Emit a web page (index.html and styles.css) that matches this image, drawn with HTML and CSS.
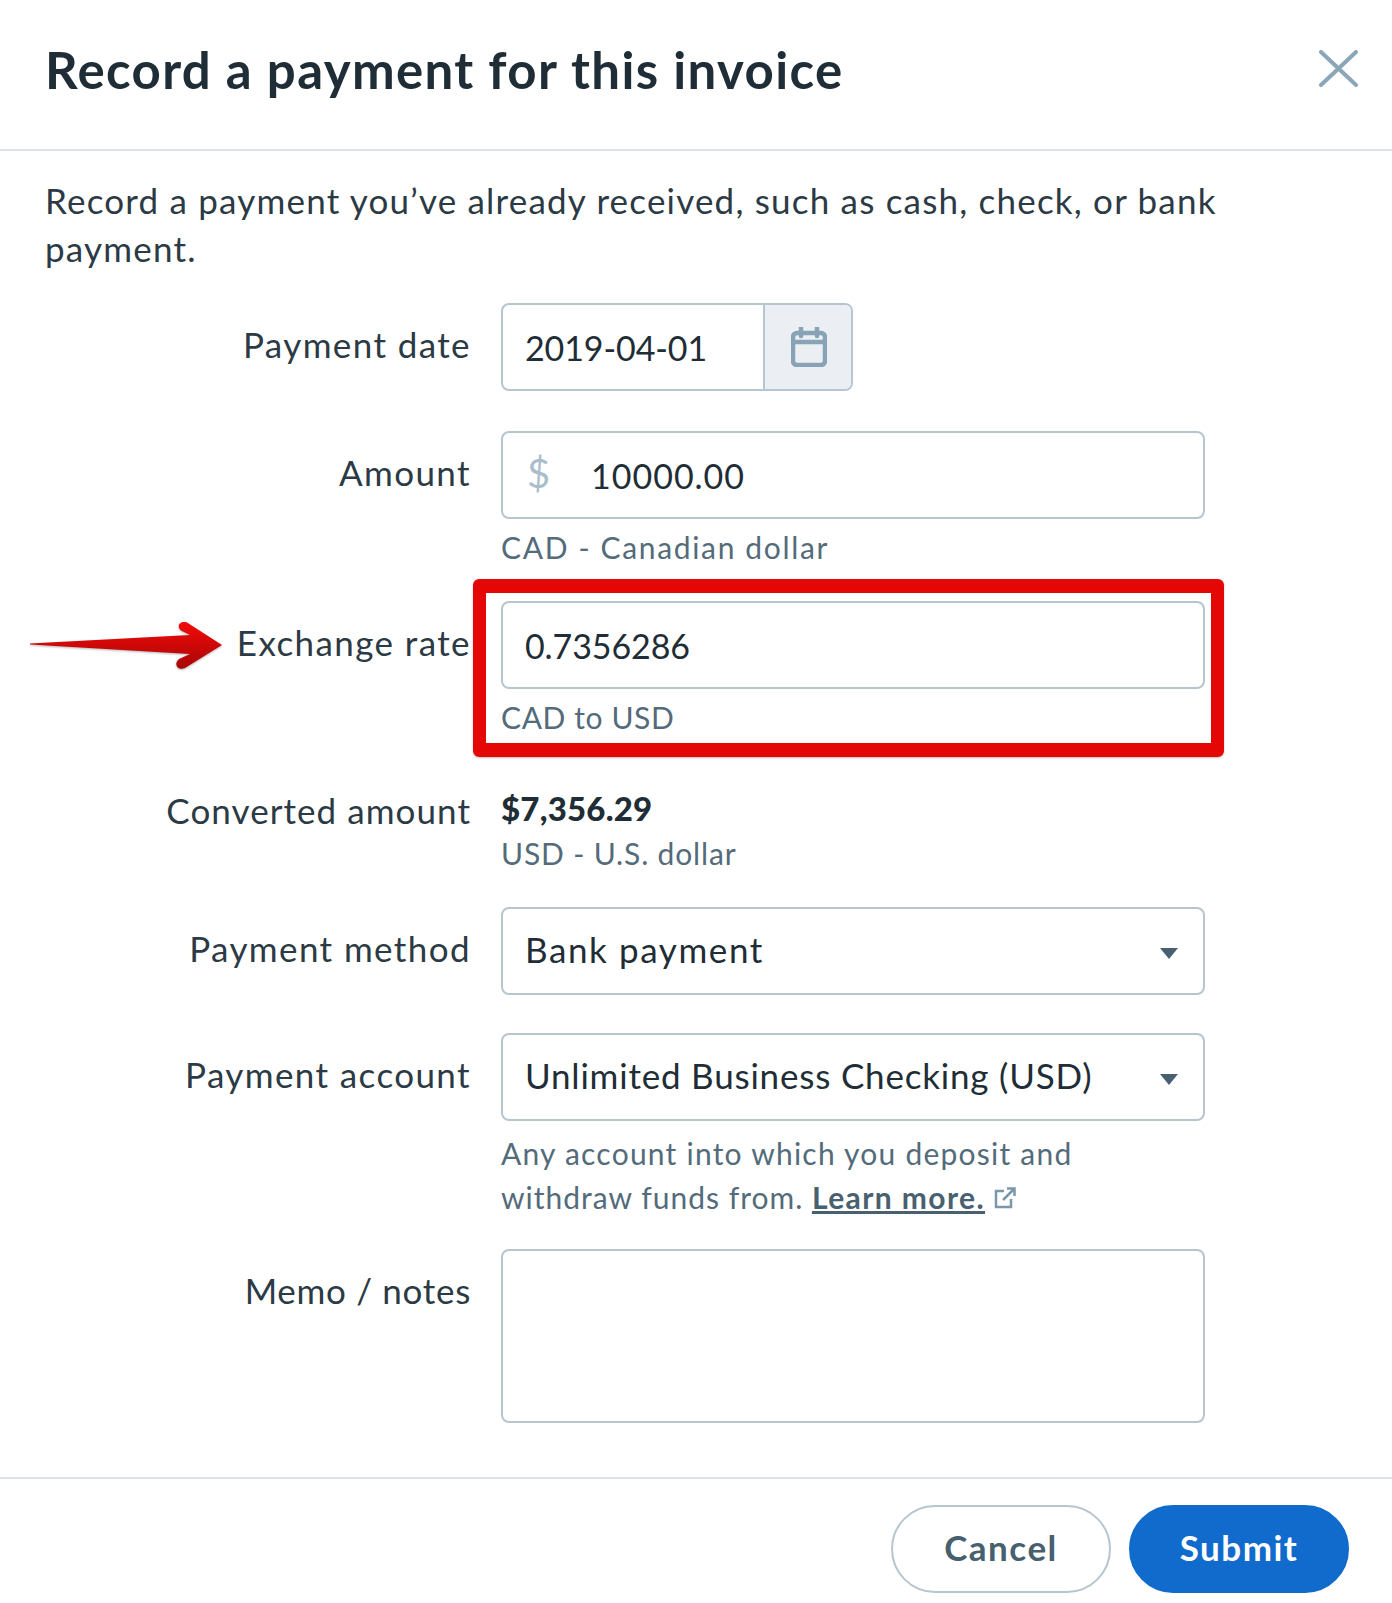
FILE: index.html
```html
<!DOCTYPE html>
<html lang="en">
<head>
<meta charset="utf-8">
<title>Record a payment</title>
<link rel="stylesheet" href="styles.css">
</head>
<body>
<div class="modal">
  <header class="modal-head">
    <h1 class="title">Record a payment for this invoice</h1>
    <svg class="close" viewBox="0 0 39 37" aria-hidden="true"><path d="M2 2 L37 35 M37 2 L2 35"/></svg>
  </header>
  <p class="intro">Record a payment you’ve already received, such as cash, check, or bank payment.</p>
  <form class="form">
    <div class="row row-date">
      <div class="label">Payment date</div>
      <div class="field">
        <div class="date">
          <div class="date-value">2019-04-01</div>
          <div class="date-btn">
            <svg class="cal" viewBox="0 0 36 40" aria-hidden="true"><rect x="2" y="6" width="32" height="32" rx="4"/><path d="M2 15 H34 M10 1 V9 M26 1 V9"/></svg>
          </div>
        </div>
      </div>
    </div>
    <div class="row row-amount">
      <div class="label">Amount</div>
      <div class="field">
        <div class="input"><span class="prefix">$</span><span class="value num-wide">10000.00</span></div>
        <div class="help help-cad">CAD - Canadian dollar</div>
      </div>
    </div>
    <div class="row row-rate">
      <svg class="arrow" viewBox="0 0 197 50" aria-hidden="true">
        <defs>
          <linearGradient id="ag" x1="0" y1="0" x2="0" y2="1">
            <stop offset="0" stop-color="#f40a0a"/>
            <stop offset="1" stop-color="#a80606"/>
          </linearGradient>
        </defs>
        <path fill="url(#ag)" d="M1 21.500 L161 13 L152 8.500 C147 4 151 -1.500 158 0.500 L193 23 L156 46 C149 49 144 42 150 37 L161 32 L1 22.500 Z"/>
      </svg>
      <div class="label">Exchange rate</div>
      <div class="field">
        <div class="highlight"></div>
        <div class="input"><span class="value num">0.7356286</span></div>
        <div class="help help-rate">CAD to USD</div>
      </div>
    </div>
    <div class="row row-converted">
      <div class="label label-static">Converted amount</div>
      <div class="field">
        <div class="strong">$7,356.29</div>
        <div class="help help-usd">USD - U.S. dollar</div>
      </div>
    </div>
    <div class="row row-method">
      <div class="label">Payment method</div>
      <div class="field">
        <div class="input select"><span class="value value-bank">Bank payment</span><span class="caret"></span></div>
      </div>
    </div>
    <div class="row row-account">
      <div class="label">Payment account</div>
      <div class="field">
        <div class="input select"><span class="value">Unlimited Business Checking (USD)</span><span class="caret"></span></div>
        <div class="help help-long"><span class="line-one">Any account into which you deposit and</span><br>withdraw funds from. <a class="link" href="#">Learn more.</a>
          <svg class="ext" viewBox="0 0 22 22" aria-hidden="true"><path d="M10 4 H2 V20 H17 V12 M9 13 L20 2 M13 1.500 H20.500 V9"/></svg>
        </div>
      </div>
    </div>
    <div class="row row-memo">
      <div class="label label-memo">Memo / notes</div>
      <div class="field"><div class="textarea"></div></div>
    </div>
  </form>
  <footer class="modal-foot">
    <button class="btn btn-cancel" type="button">Cancel</button>
    <button class="btn btn-submit" type="button">Submit</button>
  </footer>
</div>
</body>
</html>
```
FILE: styles.css
```css
* { box-sizing: border-box; }
html, body { margin: 0; padding: 0; background: #fff; }
body {
  font-family: "Lato", "Open Sans", sans-serif;
  color: #1f2d36;
  width: 1392px;
  height: 1603px;
  overflow: hidden;
}
.modal { display: flex; flex-direction: column; height: 1603px; }
.modal-head {
  height: 151px;
  flex: none;
  border-bottom: 2px solid #dce3e8;
  padding: 0 34px 0 45px;
  display: flex;
  align-items: center;
  justify-content: space-between;
}
.title { margin: 0 0 9px; font-size: 51px; line-height: 60px; font-weight: 700; letter-spacing: 1.35px; color: #1f2d36; }
.close { width: 39px; height: 37px; margin-bottom: 13px; fill: none; stroke: #8aa6b7; stroke-width: 4; stroke-linecap: round; }
.intro { margin: 25px 0 0; padding: 0 170px 0 45px; font-size: 35px; line-height: 48px; letter-spacing: 1.2px; color: #2b3a44; }
.form { display: flex; flex-direction: column; margin-top: 31px; }
.row { display: grid; grid-template-columns: 471px 704px; column-gap: 30px; position: relative; }
.label { text-align: right; font-size: 35px; line-height: 48px; padding-top: 17px; letter-spacing: 1.4px; color: #2b3a44; }
.label-static { padding-top: 0; letter-spacing: 1.06px; }
.label-memo { letter-spacing: 0.7px; }
.field { position: relative; }
.input, .textarea, .date {
  border: 2px solid #b6c6d1;
  border-radius: 8px;
  background: #fff;
}
.input {
  height: 88px;
  display: flex;
  align-items: center;
  padding: 0 25px 0 22px;
  font-size: 35px;
  letter-spacing: 0.8px;
  color: #1f2d36;
}
.value-bank { letter-spacing: 1.6px; }
.num { font-size: 34px; letter-spacing: -0.1px; }
.num-wide { font-size: 34px; letter-spacing: 1px; }
.date { width: 352px; height: 88px; display: flex; overflow: hidden; }
.date-value { flex: 1; display: flex; align-items: center; padding: 0 22px; font-size: 34px; letter-spacing: -0.1px; }
.date-btn { width: 88px; flex: none; background: #ebeff3; border-left: 2px solid #b6c6d1; display: flex; align-items: center; justify-content: center; }
.cal { width: 36px; height: 40px; margin-left: 2px; fill: none; stroke: #87a3b5; stroke-width: 4.500; stroke-linecap: round; }
.prefix { color: #a9bdca; font-size: 40px; font-weight: 400; width: 64px; flex: none; margin: -4px 0 0 2px; }
.select { justify-content: space-between; padding-bottom: 4px; }
.caret { width: 0; height: 0; margin-top: 8px; border-left: 9px solid transparent; border-right: 9px solid transparent; border-top: 11px solid #48606f; }
.help { font-size: 30px; line-height: 44px; letter-spacing: 1px; color: #536b7a; margin-top: 6px; }
.help-cad { letter-spacing: 1.65px; }
.help-rate { letter-spacing: 0.6px; }
.help-usd { margin-top: 3px; letter-spacing: 0.85px; }
.help-long { margin-top: 10px; }
.line-one { letter-spacing: 1.23px; }
.link { color: #48606f; font-weight: 700; letter-spacing: 1.4px; }
.ext { width: 22px; height: 22px; fill: none; stroke: #7b98ab; stroke-width: 2.500; }
.strong { font-weight: 900; font-size: 33px; line-height: 40px; padding-top: 2px; box-sizing: content-box; letter-spacing: 0.2px; color: #1f2d36; }
.row-amount { margin-top: 40px; }
.row-rate { margin-top: 32px; }
.row-converted { margin-top: 47px; }
.row-method { margin-top: 32px; }
.row-account { margin-top: 38px; }
.row-memo { margin-top: 30px; }
.textarea { height: 174px; }
.highlight {
  position: absolute;
  left: -28px;
  top: -22px;
  width: 751px;
  height: 178px;
  border: solid #e50606;
  border-width: 14px 13px;
  border-radius: 6px;
  box-shadow: 0 1px 2px rgba(0,0,0,.25);
  pointer-events: none;
}
.arrow {
  position: absolute;
  left: 29px;
  top: 21px;
  width: 197px;
  height: 50px;
  filter: drop-shadow(0 1px 1px rgba(0,0,0,.3));
}
.modal-foot {
  margin-top: auto;
  height: 126px;
  flex: none;
  border-top: 2px solid #dce3e8;
  display: flex;
  justify-content: flex-end;
  align-items: flex-start;
  gap: 18px;
  padding: 26px 43px 0 0;
}
.btn {
  width: 220px;
  height: 88px;
  border-radius: 44px;
  font-family: inherit;
  font-size: 35px;
  font-weight: 700;
  letter-spacing: 1.5px;
  padding-bottom: 5px;
  cursor: pointer;
}
.btn-cancel { background: #fff; border: 2px solid #b6c6d1; color: #46606f; }
.btn-submit { background: #116bcc; border: 2px solid #116bcc; color: #fff; }
```
